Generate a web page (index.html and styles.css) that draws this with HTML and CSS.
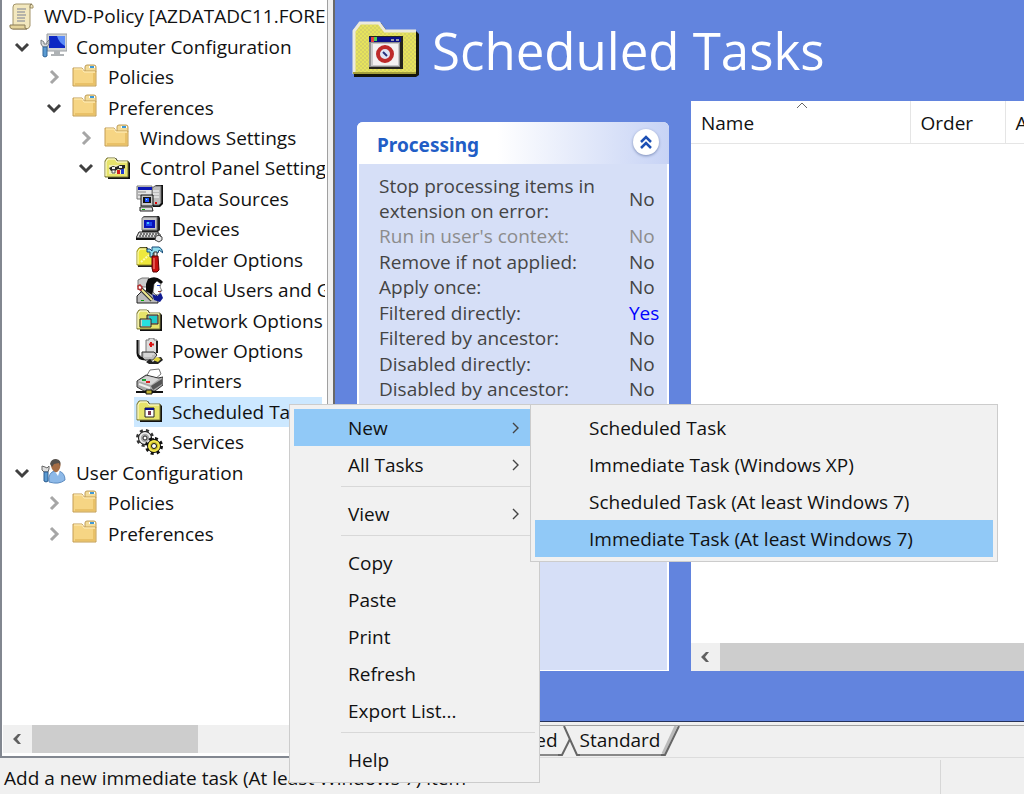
FILE: index.html
```html
<!DOCTYPE html>
<html lang="en">
<head>
  <meta charset="UTF-8" />
  <meta name="viewport" content="width=device-width, initial-scale=1.0" />
  <title>Group Policy Management Editor</title>
  <link rel="stylesheet" href="styles.css">
</head>
<body>

  <!-- shared icons -->
  <svg class="sprite" aria-hidden="true">
    <symbol id="open" viewBox="0 0 28 28">
      <path d="M8 11l6 6 6-6" fill="none" stroke="#404040" stroke-width="3"/>
    </symbol>
    <symbol id="closed" viewBox="0 0 28 28">
      <path d="M11 8l6 6-6 6" fill="none" stroke="#a6a6a6" stroke-width="3"/>
    </symbol>
    <symbol id="left" viewBox="0 0 28 28">
      <path d="M18 9h-3l-5 5 5 5h3l-4-5z" fill="#606060"/>
    </symbol>
    <symbol id="right" viewBox="0 0 10 14">
      <path d="M2 2l5 5-5 5" fill="none" stroke="#444" stroke-width="1.4"/>
    </symbol>
    <symbol id="folder" viewBox="0 0 27 27">
      <path d="M13 3q0-2 2-2h7q2 0 2 2v5H13z" fill="#f3dc98" stroke="#bd9c58"/>
      <path d="M17 3h6" stroke="#fff" stroke-width="2"/>
      <path d="M18 3h4" stroke="#3f98d6" stroke-width="2"/>
      <path d="M1 4h9l2 3h11q1 0 1 1v14H1z" fill="#f6d584" stroke="#c39d54"/>
      <path d="M2 5h8l2 3h11" fill="none" stroke="#fff0bd"/>
      <path d="M22 9v12M3 20h20" stroke="#e9c168" stroke-width="2"/>
    </symbol>
    <symbol id="scroll" viewBox="0 0 27 27">
      <path d="M5 4q0-3 3-3h15q3 1 2 4h-3v18q-1 3-4 3H5V4z" fill="#f3e8be" stroke="#a3946a"/>
      <path d="M2 22h15q-1 4 2 4H4q-3-1-2-4z" fill="#e5d49b" stroke="#8b7d58"/>
      <path d="M22 5V3q0-2 2-2" fill="none" stroke="#7d7152"/>
      <path d="M9 6h9M9 9h8M9 12h9M9 15h8M9 18h8" stroke="#7b8094"/>
    </symbol>
    <symbol id="computer" viewBox="0 0 27 27">
      <path d="M7 1h20v17H7z" fill="#d0d3d5" stroke="#999da1"/>
      <path d="M9 3h16v12H9z" fill="#0d28c4"/>
      <path d="M17 3h8v10q-6-3-8-10z" fill="#5c8cf8"/>
      <path d="M14 18h6v3h4v2H11v-2h3z" fill="#aeb2b5"/>
      <path d="M1 7v4l2 3h4l2-3V7L7 9v2H4V9z" fill="#d8dbdd" stroke="#777c80"/>
      <path d="M3 14h4v9q-2 2-4 0z" fill="#5b9bd2" stroke="#31669a"/>
    </symbol>
    <symbol id="user" viewBox="0 0 27 27">
      <path d="M9 23q-1-10 6-11h4q6 2 6 9-6 5-16 2z" fill="#8db9e8" stroke="#5d8cc0"/>
      <path d="M14 11h6l-2 6z" fill="#fff"/>
      <path d="M11 5q1-5 6-4 5 1 3 8-2 5-5 4-4-2-4-8z" fill="#a66d45"/>
      <path d="M10 5q1-5 6-5 6 1 4 7l-1-3-5 1-2 3z" fill="#55504c"/>
      <path d="M2 7v4l2 2h4l1-3V7L7 9 5 8z" fill="#ddd" stroke="#666"/>
      <path d="M4 13h4v9q-2 2-4 0z" fill="#5b9bd2" stroke="#2c5b8d"/>
    </symbol>
    <symbol id="yfolder" viewBox="0 0 27 27">
      <path d="M2 6l2-3h8l2 3h10l2 2v16H4v-2H2z" fill="#111"/>
      <path d="M1 6l2-3h8l2 3h11v16H1z" fill="#e6e36a" stroke="#77743a"/>
      <path d="M2 21V7l2-3h7l2 3h10" fill="none" stroke="#fffde0"/>
    </symbol>
    <symbol id="cpanel" viewBox="0 0 27 27">
      <use href="#yfolder"/>
      <path d="M5 10h16v9H5z" fill="#f2f0b8"/>
      <path d="M5 13l4-2 3 1 4-2h5v3l-3 2-4-1-3 2H7z" fill="#222"/>
      <path d="M8 12h3v2H8zM15 11h3v2h-3z" fill="#eee"/>
      <path d="M8 15h3v3H8z" fill="#fff" stroke="#555"/>
      <path d="M13 15h3v4h-3z" fill="#d21d1d"/>
      <path d="M17 14h3v5h-3z" fill="#1f3cd0"/>
    </symbol>
    <symbol id="datasources" viewBox="0 0 27 27">
      <path d="M17 3l3-3h7v19l-3 3h-7z" fill="#111"/>
      <path d="M16 3l3-2h6v17l-2 2h-7z" fill="#bbb" stroke="#666"/>
      <path d="M17 6h6M17 9h6M17 12h6" stroke="#fff"/>
      <path d="M1 1h15v13H1z" fill="#e4e4e4" stroke="#777"/>
      <path d="M2 2h14v3H2z" fill="#0a16b4"/>
      <path d="M2 7h8M2 10h3" stroke="#888"/>
      <path d="M5 10h12v11H5z" fill="#c8c8c8" stroke="#111"/>
      <path d="M7 12h8v6H7z" fill="#111"/>
      <path d="M9 13h4v4H9z" fill="#1a4cff"/>
      <path d="M10 14h1v1h-1z" fill="#7ff"/>
      <path d="M4 22h12l1 4H4z" fill="#ddd" stroke="#222"/>
      <path d="M19 17h2v2h-2z" fill="#e00000"/>
      <path d="M6 24h3v1H6z" fill="#00b400"/>
    </symbol>
    <symbol id="devices" viewBox="0 0 27 27">
      <path d="M6 2l2-2h15l1 2v12l-2 2H6z" fill="#222"/>
      <path d="M6 2l2-1h13v13H6z" fill="#c4c4c4" stroke="#777"/>
      <path d="M8 4h11v8H8z" fill="#0812b8"/>
      <path d="M10 6h6v4h-6z" fill="#1d46f0"/>
      <path d="M11 6h2v2h-2z" fill="#46c4ff"/>
      <path d="M3 16h19l2 6H0z" fill="#ddd" stroke="#222"/>
      <path d="M4 18h17M3 20h18" stroke="#111" stroke-dasharray="2 1"/>
      <path d="M0 23h20" stroke="#111" stroke-width="2"/>
      <path d="M20 20q3-2 6 1v3l-3 2-4-2z" fill="#e8e8e8" stroke="#444"/>
      <path d="M21 17q4 0 4 4" fill="none" stroke="#555"/>
    </symbol>
    <symbol id="folderoptions" viewBox="0 0 27 27">
      <path d="M2 5l2-4h7l2 3h8v15l-3 2H2z" fill="#222"/>
      <path d="M1 5l2-3h7l2 3h7v14H1z" fill="#efe83c" stroke="#969126"/>
      <path d="M2 18V6l2-3h6" fill="none" stroke="#fffdc8"/>
      <path d="M5 16l8-7" stroke="#fffbb0" stroke-width="2" stroke-dasharray="2 1"/>
      <path d="M11 3h3l2 2V1h7q3 1 4 6l-4-3-1 3h-5v4h-3V6h-3z" fill="#8edced" stroke="#174a78"/>
      <path d="M18 6h3v5h-3z" fill="#eee" stroke="#333"/>
      <path d="M16 10h6l1 14-2 2h-4l-1-4z" fill="#c81010" stroke="#500"/>
      <path d="M18 12v11" stroke="#ff9a8a"/>
    </symbol>
    <symbol id="users" viewBox="0 0 27 27">
      <path d="M2 3l4-2h7v9H2z" fill="#ccc" stroke="#777"/>
      <path d="M1 19l5-5h12l4 7v5H1z" fill="#bbb" stroke="#222"/>
      <path d="M12 2q7-4 13 1l2 2-2 2-4-2-3 5-2 8-6-4V7z" fill="#0b0b0b"/>
      <path d="M18 7l3-3 4 3-1 3 2 4h-2v3l-4 1-3-3z" fill="#fff" stroke="#333" stroke-width=".6"/>
      <path d="M21 8h3v1h-3z" fill="#2244cc"/>
      <path d="M22 14h3v1h-3z" fill="#8b3a3a"/>
      <path d="M16 17l5 2 4-3 2 5-3 4-6-2z" fill="#101a90"/>
      <path d="M5 12l11 11" stroke="#333" stroke-width="4"/>
      <path d="M5 12l11 11" stroke="#efe88c" stroke-width="2"/>
      <path d="M2 9l2-1 2 2-1 3-3-1z" fill="#fff" stroke="#b03030" stroke-width="1.5"/>
      <path d="M5 23h3v1H5z" fill="#00a800"/>
    </symbol>
    <symbol id="network" viewBox="0 0 27 27">
      <use href="#yfolder"/>
      <path d="M11 8h11v9H11z" fill="#9c9c9c" stroke="#222"/>
      <path d="M13 9h8v7h-8z" fill="#20c8c8"/>
      <path d="M4 12h11v8H4z" fill="#c8d8c8" stroke="#222"/>
      <path d="M6 13h8v6H6z" fill="#28e0e0"/>
    </symbol>
    <symbol id="power" viewBox="0 0 27 27">
      <path d="M2 2v13q0 6 8 6" fill="none" stroke="#111" stroke-width="3"/>
      <path d="M3 2v13q0 4 7 4" fill="none" stroke="#ccc"/>
      <path d="M10 2h3V0h5v2h3v13H10z" fill="#ddd" stroke="#777"/>
      <path d="M21 3v12" stroke="#222" stroke-width="2"/>
      <path d="M15 4v5M13 6.5h5" stroke="#d81010" stroke-width="2"/>
      <path d="M6 14h12l3 3-4 5H9l-3-3z" fill="#bdbdbd" stroke="#333"/>
      <path d="M8 16h10M8 18h8" stroke="#eee"/>
      <path d="M10 24l4-3 3 3 3-4 5-1 2 3-5 4h-9z" fill="#222"/>
      <path d="M17 22l4-3 4 2-3 3z" fill="#dfd33a"/>
    </symbol>
    <symbol id="printer" viewBox="0 0 27 27">
      <path d="M10 9l4-7 9-1 2 5-6 5z" fill="#fff" stroke="#777"/>
      <path d="M1 13l9-6 12 3 5-1v8l-8 6H8l-7-4z" fill="#a9a9a9" stroke="#333"/>
      <path d="M2 13l9-5 12 3-8 6z" fill="#d6d6d6"/>
      <path d="M15 18l11-7v5l-9 6z" fill="#555"/>
      <path d="M3 16l11 4" stroke="#eee" stroke-width="2"/>
      <path d="M6 11h4v2H6z" fill="#20a038"/>
      <path d="M10 13h4v2h-4z" fill="#d82020"/>
      <path d="M0 24h27" stroke="#111" stroke-width="2"/>
      <path d="M10 22h6v4h-6z" fill="#bfb336" stroke="#111"/>
    </symbol>
    <symbol id="scheduled" viewBox="0 0 27 27">
      <use href="#yfolder"/>
      <path d="M9 10h9v9H9z" fill="#fff" stroke="#222"/>
      <path d="M9 10h9v2H9z" fill="#0a128c"/>
      <path d="M12 13h3v4h-3z" fill="#7a3050"/>
    </symbol>
    <symbol id="services" viewBox="0 0 27 27">
      <circle cx="9" cy="9" r="6.5" fill="#aaa" stroke="#111"/>
      <circle cx="9" cy="9" r="7.5" fill="none" stroke="#333" stroke-width="3" stroke-dasharray="3 3"/>
      <circle cx="9" cy="9" r="5" fill="none" stroke="#eee" stroke-width="1.5"/>
      <circle cx="9" cy="9" r="2" fill="#fff" stroke="#222"/>
      <circle cx="18" cy="17" r="6.5" fill="#cfc02c" stroke="#111"/>
      <circle cx="18" cy="17" r="7.5" fill="none" stroke="#111" stroke-width="3" stroke-dasharray="3 3"/>
      <circle cx="18" cy="17" r="5" fill="none" stroke="#f5ea55" stroke-width="1.5"/>
      <circle cx="18" cy="17" r="2.5" fill="#fff" stroke="#111"/>
    </symbol>
  </svg>

  <div class="console">

    <div class="panes">
      <div class="tree-pane">
        <ul class="tree">
          <li class="l0"><span class="node"><svg class="icon"><use href="#scroll"/></svg>WVD-Policy [AZDATADC11.FORES</span></li>
          <li class="l1"><button class="toggle" aria-label="Collapse"><svg><use href="#open"/></svg></button><span class="node"><svg class="icon"><use href="#computer"/></svg>Computer Configuration</span></li>
          <li class="l2"><button class="toggle" aria-label="Expand"><svg><use href="#closed"/></svg></button><span class="node"><svg class="icon"><use href="#folder"/></svg>Policies</span></li>
          <li class="l2"><button class="toggle" aria-label="Collapse"><svg><use href="#open"/></svg></button><span class="node"><svg class="icon"><use href="#folder"/></svg>Preferences</span></li>
          <li class="l3"><button class="toggle" aria-label="Expand"><svg><use href="#closed"/></svg></button><span class="node"><svg class="icon"><use href="#folder"/></svg>Windows Settings</span></li>
          <li class="l3"><button class="toggle" aria-label="Collapse"><svg><use href="#open"/></svg></button><span class="node"><svg class="icon"><use href="#cpanel"/></svg>Control Panel Settings</span></li>
          <li class="l4"><span class="node"><svg class="icon"><use href="#datasources"/></svg>Data Sources</span></li>
          <li class="l4"><span class="node"><svg class="icon"><use href="#devices"/></svg>Devices</span></li>
          <li class="l4"><span class="node"><svg class="icon"><use href="#folderoptions"/></svg>Folder Options</span></li>
          <li class="l4"><span class="node"><svg class="icon"><use href="#users"/></svg>Local Users and Groups</span></li>
          <li class="l4"><span class="node"><svg class="icon"><use href="#network"/></svg>Network Options</span></li>
          <li class="l4"><span class="node"><svg class="icon"><use href="#power"/></svg>Power Options</span></li>
          <li class="l4"><span class="node"><svg class="icon"><use href="#printer"/></svg>Printers</span></li>
          <li class="l4"><span class="node selected"><svg class="icon"><use href="#scheduled"/></svg>Scheduled Tasks</span></li>
          <li class="l4"><span class="node"><svg class="icon"><use href="#services"/></svg>Services</span></li>
          <li class="l1"><button class="toggle" aria-label="Collapse"><svg><use href="#open"/></svg></button><span class="node"><svg class="icon"><use href="#user"/></svg>User Configuration</span></li>
          <li class="l2"><button class="toggle" aria-label="Expand"><svg><use href="#closed"/></svg></button><span class="node"><svg class="icon"><use href="#folder"/></svg>Policies</span></li>
          <li class="l2"><button class="toggle" aria-label="Expand"><svg><use href="#closed"/></svg></button><span class="node"><svg class="icon"><use href="#folder"/></svg>Preferences</span></li>
        </ul>
        <div class="scrollbar">
          <button aria-label="Scroll left"><svg><use href="#left"/></svg></button>
          <div class="thumb"></div>
        </div>
      </div>

      <div class="result-pane">
        <div class="result">
          <h1>
            <svg class="big-icon" viewBox="0 0 68 58" aria-hidden="true">
              <defs>
                <pattern id="dither" width="4" height="4" patternUnits="userSpaceOnUse">
                  <path d="M0 0h4v4H0z" fill="#e6e35c"/>
                  <path d="M0 0h2v2H0zM2 2h2v2H2z" fill="#d6d264"/>
                </pattern>
              </defs>
              <path d="M2 10l7-8h20l6 8h29l3 3v41l-3 2H2z" fill="#15160c"/>
              <path d="M1 9l7-8h19l6 8h31v44H1z" fill="url(#dither)"/>
              <path d="M2 53V10l6-8h19l6 8h31" fill="none" stroke="#eceadc" stroke-width="3"/>
              <path d="M1 52h63" stroke="#a5a13c" stroke-width="2"/>
              <path d="M17 15h34v33H17z" fill="#24241c"/>
              <path d="M17 16h31v30H17z" fill="#8d8d8d"/>
              <path d="M19 22h28v23H19z" fill="#c9c9c9"/>
              <path d="M21 23h25v21H21z" fill="#f4f1f1"/>
              <path d="M17 16h32v5H17z" fill="#0a0f86"/>
              <path d="M19 16h3v5h-3z" fill="#e04040"/>
              <path d="M22 16h3v4h-3z" fill="#4ccf50"/>
              <path d="M39 19h3M44 19h3" stroke="#99a" stroke-width="2"/>
              <circle cx="33" cy="33" r="7" fill="#dfe4f4" stroke="#bd2a2a" stroke-width="4"/>
              <path d="M31 31l4 4" stroke="#26307c" stroke-width="2"/>
            </svg>
            Scheduled Tasks
          </h1>

          <div class="columns">
            <div class="card">
              <div class="card-head">
                <h2>Processing</h2>
                <button class="collapse" aria-label="Collapse">
                  <svg viewBox="0 0 14 16"><path d="M2 8l5-5 5 5M2 14l5-5 5 5" fill="none" stroke="#1c4fb4" stroke-width="2.5"/></svg>
                </button>
              </div>
              <table class="props">
                <tr><th>Stop processing items in extension on error:</th><td>No</td></tr>
                <tr class="off"><th>Run in user's context:</th><td>No</td></tr>
                <tr><th>Remove if not applied:</th><td>No</td></tr>
                <tr><th>Apply once:</th><td>No</td></tr>
                <tr><th>Filtered directly:</th><td class="yes">Yes</td></tr>
                <tr><th>Filtered by ancestor:</th><td>No</td></tr>
                <tr><th>Disabled directly:</th><td>No</td></tr>
                <tr><th>Disabled by ancestor:</th><td>No</td></tr>
              </table>
            </div>

            <div class="list">
              <table class="list-head">
                <tr>
                  <th class="name">Name <svg class="sort" viewBox="0 0 12 8"><path d="M1 7l5-5 5 5" fill="none" stroke="#666"/></svg></th>
                  <th class="order">Order</th>
                  <th>Action</th>
                </tr>
              </table>
              <div class="list-body"></div>
              <div class="scrollbar">
                <button aria-label="Scroll left"><svg><use href="#left"/></svg></button>
                <div class="thumb wide"></div>
              </div>
            </div>
          </div>
        </div>

        <div class="tabs">
          <button class="tab">Extended</button>
          <svg class="slant" viewBox="0 0 22 30" aria-hidden="true">
            <path d="M0 29h4l8-16" fill="none" stroke="#666" stroke-width="2"/>
            <path d="M6 0l13 29h3" fill="none" stroke="#666" stroke-width="2"/>
          </svg>
          <button class="tab active">Standard</button>
          <svg class="slant" viewBox="0 0 22 30" aria-hidden="true">
            <path d="M2 28L15 0" fill="none" stroke="#bbb" stroke-width="3"/>
            <path d="M0 29h4L18 0" fill="none" stroke="#666" stroke-width="2"/>
          </svg>
        </div>
      </div>
    </div>

    <div class="status">
      <span class="message">Add a new immediate task (At least Windows 7) item</span>
      <span class="cell"></span>
    </div>

    <div class="menu context" role="menu">
      <button class="hot" role="menuitem">New<svg class="more"><use href="#right"/></svg></button>
      <button role="menuitem">All Tasks<svg class="more"><use href="#right"/></svg></button>
      <hr>
      <button role="menuitem">View<svg class="more"><use href="#right"/></svg></button>
      <hr>
      <button role="menuitem">Copy</button>
      <button role="menuitem">Paste</button>
      <button role="menuitem">Print</button>
      <button role="menuitem">Refresh</button>
      <button role="menuitem">Export List...</button>
      <hr>
      <button role="menuitem">Help</button>
    </div>

    <div class="menu submenu" role="menu">
      <button role="menuitem">Scheduled Task</button>
      <button role="menuitem">Immediate Task (Windows XP)</button>
      <button role="menuitem">Scheduled Task (At least Windows 7)</button>
      <button class="hot" role="menuitem">Immediate Task (At least Windows 7)</button>
    </div>

  </div>

</body>
</html>
```
FILE: styles.css
```css
* {
  box-sizing: border-box;
}
body {
  margin: 0;
  font-family: "Open Sans", "Noto Sans", sans-serif;
  font-size: 19px;
  color: #111;
  background: #f0f0f0;
}
button {
  font: inherit;
  color: inherit;
  background: none;
  border: 0;
  padding: 0;
}
.sprite {
  display: none;
}
.console {
  position: relative;
  display: flex;
  flex-direction: column;
  min-height: 100vh;
  overflow: hidden;
}
.panes {
  flex: 1;
  display: flex;
}

/* tree */
.tree-pane {
  width: 328px;
  flex: none;
  display: flex;
  flex-direction: column;
  background: #fff;
  border: 2px solid #828790;
  border-top: 0;
  border-right: 1px solid #a0a0a0;
  padding: 1px 2px 3px 1px;
}
.tree {
  list-style: none;
  margin: 0;
  padding: 0;
  flex: none;
  min-height: 69vh;
  display: grid;
  grid-auto-rows: 1fr;
  overflow: hidden;
}
.tree li {
  display: flex;
  align-items: stretch;
  min-width: 0;
  white-space: nowrap;
}
.l0 { padding-left: 3px; }
.l1 { padding-left: 5px; }
.l2 { padding-left: 37px; }
.l3 { padding-left: 69px; }
.l4 { padding-left: 131px; }
.toggle {
  width: 30px;
  flex: none;
  display: flex;
  align-items: center;
}
.toggle svg {
  width: 28px;
  height: 28px;
}
.node {
  display: flex;
  align-items: center;
  gap: 9px;
  padding: 0 4px 0 2px;
}
.node.selected {
  background: #cce8ff;
}
.icon {
  width: 27px;
  height: 27px;
  flex: none;
}

/* scroll bars */
.scrollbar {
  display: flex;
  height: 28px;
  background: #f0f0f0;
}
.tree-pane .scrollbar {
  margin-top: auto;
}
.scrollbar button {
  width: 29px;
}
.scrollbar svg {
  display: block;
  width: 28px;
  height: 28px;
}
.thumb {
  width: 166px;
  background: #cdcdcd;
}
.thumb.wide {
  flex: 1;
}

/* result pane */
.result-pane {
  flex: 1;
  min-width: 0;
  display: flex;
  flex-direction: column;
  margin-left: 5px;
}
.result {
  flex: 1;
  display: flex;
  flex-direction: column;
  background: #6284de;
  border-left: 2px solid #696969;
  border-bottom: 1px solid #26325a;
  padding: 19px 0 50px 17px;
}
h1 {
  display: flex;
  align-items: center;
  gap: 12px;
  height: 62px;
  margin: 0 0 20px;
  font-size: 51px;
  font-weight: 400;
  color: #fff;
  white-space: nowrap;
}
.big-icon {
  width: 68px;
  height: 58px;
}
.columns {
  flex: 1;
  display: flex;
  gap: 22px;
  padding-left: 5px;
}
.card {
  width: 312px;
  flex: none;
  margin-top: 21px;
  background: #d6dff7;
  border: 1px solid #fff;
  border-width: 0 2px 1px;
  border-radius: 6px 6px 0 0;
}
.card-head {
  display: flex;
  align-items: center;
  justify-content: space-between;
  height: 42px;
  margin: 0 -2px;
  padding: 0 10px 2px 20px;
  border-radius: 6px 6px 0 0;
  background: linear-gradient(to right, #fff 45%, #c7d3f5);
}
h2 {
  margin: 0;
  padding-top: 6px;
  font-family: "Noto Sans", sans-serif;
  font-size: 19px;
  line-height: 25px;
  font-weight: 700;
  color: #215dc6;
}
.collapse {
  width: 26px;
  height: 26px;
  display: flex;
  align-items: center;
  justify-content: center;
  border-radius: 50%;
  background: #fff;
  box-shadow: 0 1px 3px #7c8db8;
}
.collapse svg {
  width: 14px;
  height: 16px;
}
.props {
  width: 100%;
  margin-top: 10px;
  border-collapse: collapse;
  line-height: 25px;
  color: #444;
}
.props th {
  padding: 0 0 0 20px;
  font-weight: 400;
  text-align: left;
}
.props td {
  width: 38px;
  padding: 0;
}
.props tr:nth-child(odd) {
  height: 26px;
}
.props .off {
  color: #8c8c8c;
}
.props .yes {
  color: #00f;
}

/* item list */
.list {
  flex: 1;
  min-width: 0;
  display: flex;
  flex-direction: column;
  background: #fff;
  overflow: hidden;
}
.list-head {
  table-layout: fixed;
  width: 420px;
  border-collapse: collapse;
}
.list-head th {
  height: 42px;
  padding: 2px 10px 0;
  font-weight: 400;
  text-align: left;
  border-right: 1px solid #e5e5e5;
  border-bottom: 1px solid #e5e5e5;
}
.list-head .name {
  position: relative;
  width: 219px;
}
.list-head .order {
  width: 95px;
}
.sort {
  position: absolute;
  top: 0;
  right: 102px;
  width: 12px;
  height: 8px;
}
.list-body {
  flex: 1;
}

/* tabs */
.tabs {
  display: flex;
  height: 33px;
  margin-top: 3px;
  padding-left: 141px;
  border-top: 1px solid #a0a0a0;
  border-bottom: 1px solid #dcdcdc;
}
.tab {
  height: 30px;
  line-height: 28px;
  border-bottom: 2px solid #888;
}
.slant {
  width: 22px;
  height: 30px;
}

/* status bar */
.status {
  display: flex;
  height: 36px;
}
.message {
  flex: 1;
  padding-left: 4px;
  line-height: 40px;
  white-space: nowrap;
}
.cell {
  width: 84px;
  margin-top: 2px;
  border-left: 1px solid #d7d7d7;
}

/* pop-up menus */
.menu {
  position: absolute;
  top: 404px;
  display: flex;
  flex-direction: column;
  padding: 4px;
  background: #f1f1f1;
  border: 1px solid #ccc;
}
.menu button {
  display: flex;
  align-items: center;
  justify-content: space-between;
  height: 37px;
  padding: 1px 14px 0 54px;
  white-space: nowrap;
}
.menu .hot {
  background: #91c9f7;
}
.menu hr {
  width: auto;
  margin: 3px 0 8px 47px;
  border: 0;
  border-top: 1px solid #d8d8d8;
}
.context {
  left: 289px;
  width: 251px;
}
.submenu {
  left: 530px;
  width: 468px;
}
.more {
  width: 10px;
  height: 14px;
}
```
